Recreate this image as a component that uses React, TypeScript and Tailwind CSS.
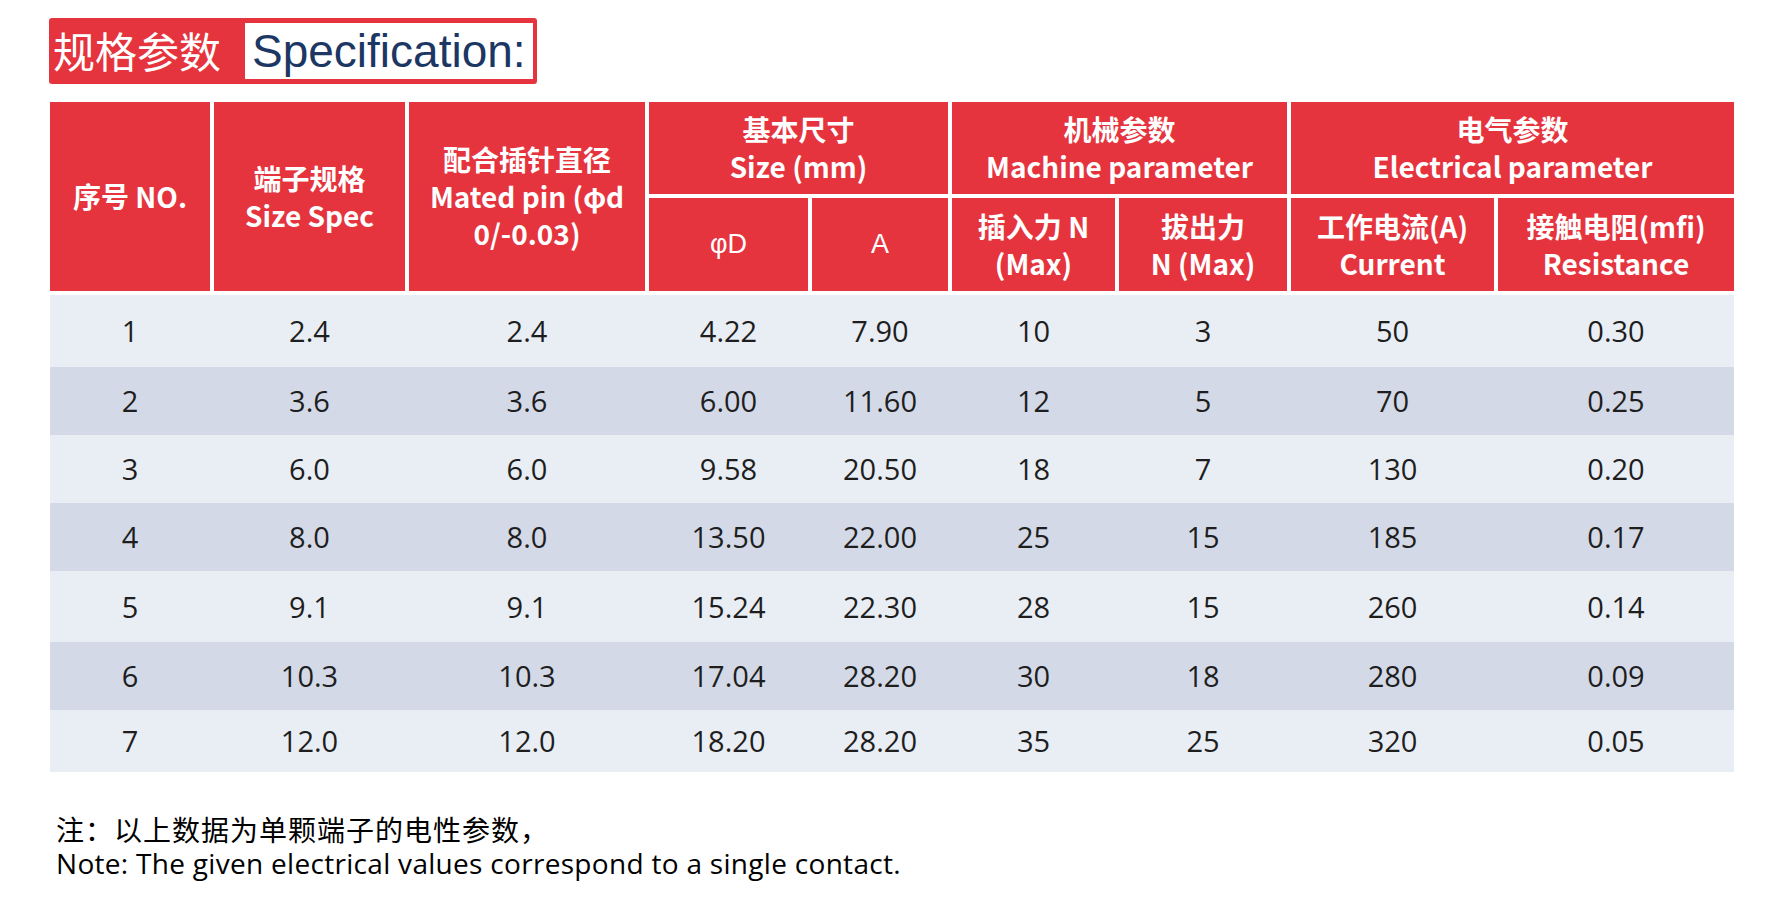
import React from "react";

const rows = [
  { h: "h-[72px]", bg: "bg-[#e9edf4]", v: ["1", "2.4", "2.4", "4.22", "7.90", "10", "3", "50", "0.30"] },
  { h: "h-[68px]", bg: "bg-[#d3d9e6]", v: ["2", "3.6", "3.6", "6.00", "11.60", "12", "5", "70", "0.25"] },
  { h: "h-[68px]", bg: "bg-[#e9edf4]", v: ["3", "6.0", "6.0", "9.58", "20.50", "18", "7", "130", "0.20"] },
  { h: "h-[68px]", bg: "bg-[#d3d9e6]", v: ["4", "8.0", "8.0", "13.50", "22.00", "25", "15", "185", "0.17"] },
  { h: "h-[71px]", bg: "bg-[#e9edf4]", v: ["5", "9.1", "9.1", "15.24", "22.30", "28", "15", "260", "0.14"] },
  { h: "h-[68px]", bg: "bg-[#d3d9e6]", v: ["6", "10.3", "10.3", "17.04", "28.20", "30", "18", "280", "0.09"] },
  { h: "h-[62px]", bg: "bg-[#e9edf4]", v: ["7", "12.0", "12.0", "18.20", "28.20", "35", "25", "320", "0.05"] },
];

const cols = "grid-cols-[160px_191px_236px_159px_136px_163px_168px_203px_236px]";

function H({ className = "", children }: { className?: string; children: React.ReactNode }) {
  return (
    <div
      className={`flex flex-col items-center justify-center bg-[#e5343e] text-white font-bold text-[28px] leading-[37px] text-center ${className}`}
      style={{ fontFamily: '"Noto Sans CJK SC", "Noto Sans", sans-serif' }}
    >
      {children}
    </div>
  );
}

export default function App() {
  return (
    <div className="w-[1781px] h-[920px] bg-white pt-[18px] pl-[49px]">
      {/* Title */}
      <div className="flex items-center w-[488px] h-[66px] bg-[#e5343e] rounded-[3px] pl-[4px] pr-[4px]">
        <div
          className="text-white text-[42px] leading-none w-[192px] -mt-[2px]"
          style={{ fontFamily: '"Noto Sans CJK SC", sans-serif' }}
        >
          规格参数
        </div>
        <div
          className="flex items-center flex-1 h-[56px] bg-white pl-[7px] text-[#1c3763] text-[46px] leading-none"
          style={{ fontFamily: '"Liberation Sans", Arial, sans-serif' }}
        >
          Specification:
        </div>
      </div>

      {/* Table */}
      <div className="mt-[18px] ml-[1px] w-[1684px]">
        <div className={`grid ${cols} grid-rows-[92px_93px] gap-[4px]`}>
          <H className="row-span-2">序号 NO.</H>
          <H className="row-span-2">
            <span>端子规格</span>
            <span>Size Spec</span>
          </H>
          <H className="row-span-2">
            <span>配合插针直径</span>
            <span>Mated pin (φd</span>
            <span>0/-0.03)</span>
          </H>
          <H className="col-span-2">
            <span>基本尺寸</span>
            <span>Size (mm)</span>
          </H>
          <H className="col-span-2">
            <span>机械参数</span>
            <span>Machine parameter</span>
          </H>
          <H className="col-span-2">
            <span>电气参数</span>
            <span>Electrical parameter</span>
          </H>
          <div
            className="flex items-center justify-center bg-[#e5343e] text-white text-[27px]"
            style={{ fontFamily: '"Liberation Sans", Arial, sans-serif' }}
          >
            φD
          </div>
          <div
            className="flex items-center justify-center bg-[#e5343e] text-white text-[27px]"
            style={{ fontFamily: '"Liberation Sans", Arial, sans-serif' }}
          >
            A
          </div>
          <H>
            <span>插入力 N</span>
            <span>(Max)</span>
          </H>
          <H>
            <span>拔出力</span>
            <span>N (Max)</span>
          </H>
          <H>
            <span>工作电流(A)</span>
            <span>Current</span>
          </H>
          <H>
            <span>接触电阻(mfi)</span>
            <span>Resistance</span>
          </H>
        </div>

        <div className="mt-[4px]" style={{ fontFamily: '"Open Sans", "Noto Sans", sans-serif' }}>
          {rows.map((r, i) => (
            <div key={i} className={`grid ${cols} gap-x-[4px] ${r.h} ${r.bg}`}>
              {r.v.map((v, j) => (
                <div key={j} className="flex items-center justify-center text-[29px] text-[#1e1e1e]">
                  {v}
                </div>
              ))}
            </div>
          ))}
        </div>
      </div>

      {/* Note */}
      <div className="mt-[40px] ml-[7px] leading-[34px] text-black">
        <div
          className="text-[28px] tracking-[1px]"
          style={{ fontFamily: '"Noto Sans CJK SC", sans-serif' }}
        >
          注：以上数据为单颗端子的电性参数，
        </div>
        <div
          className="text-[28px] tracking-[0.3px]"
          style={{ fontFamily: '"Open Sans", "Noto Sans", sans-serif' }}
        >
          Note: The given electrical values correspond to a single contact.
        </div>
      </div>
    </div>
  );
}
